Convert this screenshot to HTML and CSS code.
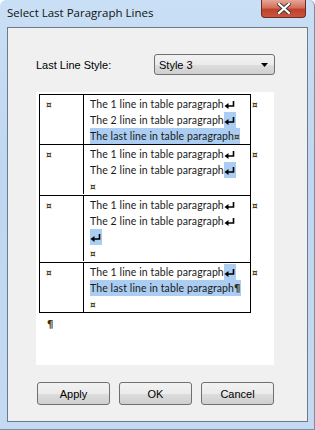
FILE: index.html
```html
<!DOCTYPE html>
<html>
<head>
<meta charset="utf-8">
<link rel="stylesheet" href="styles.css">
</head>
<body>
<div class="window">
  <div class="titlebar">
    <span class="title">Select Last Paragraph Lines</span>
    <div class="close">
      <svg width="14" height="11" viewBox="0 0 14 11"><path d="M2 1 L12 10 M12 1 L2 10" stroke="#3a3a3a" stroke-width="4" stroke-linecap="square"/><path d="M2 1 L12 10 M12 1 L2 10" stroke="#fff" stroke-width="2.2" stroke-linecap="square"/></svg>
    </div>
  </div>
  <div class="client">
    <div class="style-row">
      <span class="label">Last Line Style:</span>
      <div class="combo">
        <span>Style 3</span>
        <svg class="drop" width="7" height="4" viewBox="0 0 7 4"><path d="M0 0 H7 L3.5 4 Z" fill="#000"/></svg>
      </div>
    </div>
    <div class="doc">
      <div class="row">
        <div class="cells">
          <div class="c1"><div class="line"><span class="mk">¤</span></div></div>
          <div class="c2">
            <div class="line">The 1 line in table paragraph<span class="br"><svg width="12" height="16" viewBox="0 0 12 16"><path d="M4 10 H9.5 V5" fill="none" stroke="#000" stroke-width="1.6"/><path d="M0.5 10 L4.5 7 V13 Z" fill="#000"/></svg></span></div>
            <div class="line">The 2 line in table paragraph<span class="br hl"><svg width="12" height="16" viewBox="0 0 12 16"><path d="M4 10 H9.5 V5" fill="none" stroke="#000" stroke-width="1.6"/><path d="M0.5 10 L4.5 7 V13 Z" fill="#000"/></svg></span></div>
            <div class="line"><span class="hl">The last line in table paragraph<span class="mk">¤</span></span></div>
          </div>
        </div>
        <div class="mark"><span class="mk">¤</span></div>
      </div>
      <div class="row">
        <div class="cells pb">
          <div class="c1"><div class="line"><span class="mk">¤</span></div></div>
          <div class="c2">
            <div class="line">The 1 line in table paragraph<span class="br"><svg width="12" height="16" viewBox="0 0 12 16"><path d="M4 10 H9.5 V5" fill="none" stroke="#000" stroke-width="1.6"/><path d="M0.5 10 L4.5 7 V13 Z" fill="#000"/></svg></span></div>
            <div class="line">The 2 line in table paragraph<span class="br hl"><svg width="12" height="16" viewBox="0 0 12 16"><path d="M4 10 H9.5 V5" fill="none" stroke="#000" stroke-width="1.6"/><path d="M0.5 10 L4.5 7 V13 Z" fill="#000"/></svg></span></div>
            <div class="line"><span class="mk">¤</span></div>
          </div>
        </div>
        <div class="mark"><span class="mk">¤</span></div>
      </div>
      <div class="row">
        <div class="cells pb">
          <div class="c1"><div class="line"><span class="mk">¤</span></div></div>
          <div class="c2">
            <div class="line">The 1 line in table paragraph<span class="br"><svg width="12" height="16" viewBox="0 0 12 16"><path d="M4 10 H9.5 V5" fill="none" stroke="#000" stroke-width="1.6"/><path d="M0.5 10 L4.5 7 V13 Z" fill="#000"/></svg></span></div>
            <div class="line">The 2 line in table paragraph<span class="br"><svg width="12" height="16" viewBox="0 0 12 16"><path d="M4 10 H9.5 V5" fill="none" stroke="#000" stroke-width="1.6"/><path d="M0.5 10 L4.5 7 V13 Z" fill="#000"/></svg></span></div>
            <div class="line"><span class="br hl"><svg width="12" height="16" viewBox="0 0 12 16"><path d="M4 10 H9.5 V5" fill="none" stroke="#000" stroke-width="1.6"/><path d="M0.5 10 L4.5 7 V13 Z" fill="#000"/></svg></span></div>
            <div class="line"><span class="mk">¤</span></div>
          </div>
        </div>
        <div class="mark"><span class="mk">¤</span></div>
      </div>
      <div class="row">
        <div class="cells last">
          <div class="c1"><div class="line"><span class="mk">¤</span></div></div>
          <div class="c2">
            <div class="line">The 1 line in table paragraph<span class="br hl"><svg width="12" height="16" viewBox="0 0 12 16"><path d="M4 10 H9.5 V5" fill="none" stroke="#000" stroke-width="1.6"/><path d="M0.5 10 L4.5 7 V13 Z" fill="#000"/></svg></span></div>
            <div class="line"><span class="hl">The last line in table paragraph<span class="pil">¶</span></span></div>
            <div class="line"><span class="mk">¤</span></div>
          </div>
        </div>
        <div class="mark"><span class="mk">¤</span></div>
      </div>
      <div class="para"><span class="pil">¶</span></div>
    </div>
    <div class="buttons">
      <button class="btn">Apply</button>
      <button class="btn">OK</button>
      <button class="btn">Cancel</button>
    </div>
  </div>
</div>
</body>
</html>
```
FILE: styles.css
```css
* { box-sizing: border-box; }
html, body { margin: 0; padding: 0; }
body { width: 315px; height: 430px; overflow: hidden; background: #fff; }

.window {
  width: 315px;
  height: 430px;
  background: linear-gradient(180deg, #c9dff5 0%, #bfd7f0 40%, #c3daf2 100%);
  border-right: 1px solid #7f8d9b;
  border-bottom: 1px solid #7f8d9b;
  border-radius: 6px 6px 0 0;
}

.titlebar {
  height: 27px;
  display: flex;
  justify-content: space-between;
  align-items: flex-start;
}
.title {
  font-family: "Open Sans", sans-serif;
  font-size: 11.5px;
  color: #111;
  padding: 5px 0 0 7px;
  line-height: 16px;
}
.close {
  margin-right: 8px;
  width: 45px;
  height: 18px;
  border: 1px solid #6e2b23;
  border-top: none;
  border-radius: 0 0 4px 4px;
  background: linear-gradient(180deg, #e7a596 0%, #d4705d 45%, #c0412c 55%, #c9553f 100%);
  display: flex;
  align-items: center;
  justify-content: center;
}

.client {
  margin-left: 7px;
  width: 301px;
  height: 395px;
  background: #f0f0f0;
  border: 1px solid #6c7b89;
}

.style-row {
  margin-top: 26px;
  padding-left: 28px;
  display: flex;
  align-items: center;
}
.label {
  width: 118px;
  font-family: "Liberation Sans", Arial, sans-serif;
  font-size: 11px;
  color: #000;
}
.combo {
  width: 121px;
  height: 21px;
  border: 1px solid #707070;
  border-radius: 3px;
  background: linear-gradient(180deg, #f2f2f2 0%, #ebebeb 50%, #dddddd 51%, #cfcfcf 100%);
  display: flex;
  align-items: center;
  justify-content: space-between;
  padding: 0 6px 0 4px;
  font-family: "Liberation Sans", Arial, sans-serif;
  font-size: 11px;
  color: #000;
}

.doc {
  margin: 17px 0 0 28px;
  width: 238px;
  height: 273px;
  background: #fff;
  padding: 2px 0 0 3px;
  font-family: Lato, "Liberation Sans", sans-serif;
  font-size: 10.5px;
  letter-spacing: 0.1px;
  color: #1a1a1a;
}
.row { display: flex; align-items: flex-start; }
.cells {
  display: flex;
  width: 212px;
  border: 1px solid #000;
  border-bottom: none;
  padding-top: 1px;
}
.cells.pb { padding-bottom: 1px; }
.cells.last { border-bottom: 1px solid #000; }
.c1 {
  width: 44px;
  border-right: 1px solid #000;
  padding-left: 6px;
  margin-top: -1px;
  padding-top: 1px;
}
.c2 { flex: 1; padding-left: 6px; }
.line {
  height: 16px;
  line-height: 16px;
  white-space: nowrap;
}
.mark {
  padding: 2px 0 0 1px;
  line-height: 16px;
}
.mk {
  font-family: "DejaVu Sans", sans-serif;
  font-size: 9px;
  font-weight: bold;
  color: #4a3a12;
  letter-spacing: 0;
}
.pil {
  font-family: "DejaVu Sans", sans-serif;
  font-size: 10px;
  font-weight: bold;
  color: #3a2a08;
}
.hl {
  display: inline-block;
  height: 16px;
  vertical-align: top;
  background: #abcdf1;
}
.br {
  display: inline-block;
  width: 12px;
  height: 16px;
  vertical-align: top;
}
.br svg { display: block; }
.para {
  margin-top: 3px;
  padding-left: 8px;
  line-height: 16px;
}

.buttons {
  margin-top: 17px;
  padding-left: 29px;
  display: flex;
  gap: 9px;
}
.btn {
  width: 73px;
  height: 23px;
  margin: 0;
  border: 1px solid #707070;
  border-radius: 3px;
  background: linear-gradient(180deg, #f2f2f2 0%, #ebebeb 50%, #dddddd 51%, #cfcfcf 100%);
  font-family: "Liberation Sans", Arial, sans-serif;
  font-size: 11px;
  color: #000;
  padding: 0;
}
```
